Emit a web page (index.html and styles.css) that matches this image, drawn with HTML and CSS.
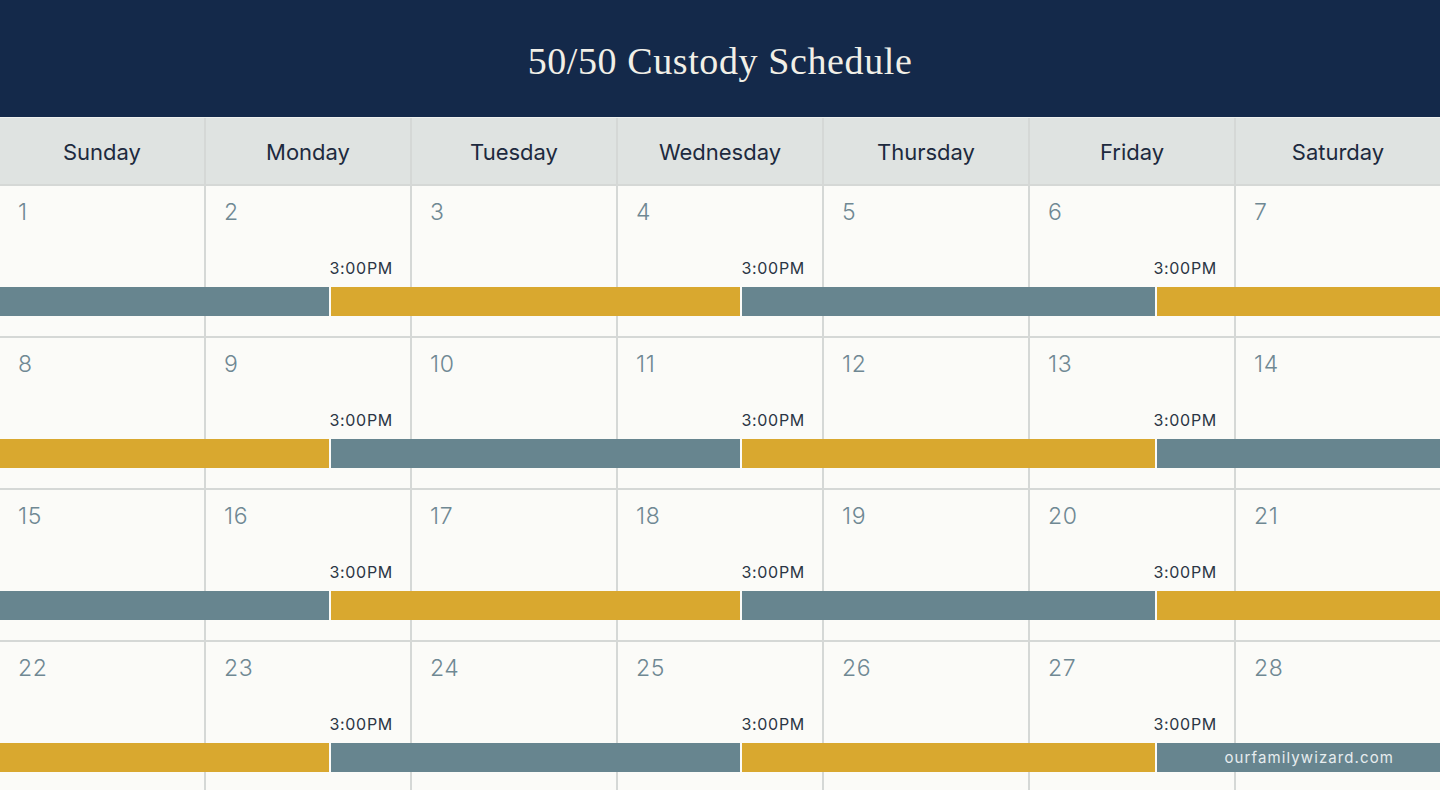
FILE: index.html
```html
<!DOCTYPE html>
<html lang="en">
<head>
<meta charset="utf-8">
<title>50/50 Custody Schedule</title>
<link rel="stylesheet" href="styles.css">
</head>
<body>
<header class="title-bar"><h1 class="title">50/50 Custody Schedule</h1></header>
<main class="calendar">
  <div class="weekdays">
    <div class="wd">Sunday</div><div class="wd">Monday</div><div class="wd">Tuesday</div><div class="wd">Wednesday</div><div class="wd">Thursday</div><div class="wd">Friday</div><div class="wd">Saturday</div>
  </div>

  <div class="week">
    <div class="day"><span class="num">1</span></div>
    <div class="day"><span class="num">2</span><span class="time">3:00PM</span></div>
    <div class="day"><span class="num">3</span></div>
    <div class="day"><span class="num">4</span><span class="time">3:00PM</span></div>
    <div class="day"><span class="num">5</span></div>
    <div class="day"><span class="num">6</span><span class="time">3:00PM</span></div>
    <div class="day"><span class="num">7</span></div>
    <div class="bar"><span class="seg s1 blue"></span><span class="seg s2 gold"></span><span class="seg s3 blue"></span><span class="seg s4 gold"></span></div>
  </div>

  <div class="week">
    <div class="day"><span class="num">8</span></div>
    <div class="day"><span class="num">9</span><span class="time">3:00PM</span></div>
    <div class="day"><span class="num">10</span></div>
    <div class="day"><span class="num">11</span><span class="time">3:00PM</span></div>
    <div class="day"><span class="num">12</span></div>
    <div class="day"><span class="num">13</span><span class="time">3:00PM</span></div>
    <div class="day"><span class="num">14</span></div>
    <div class="bar"><span class="seg s1 gold"></span><span class="seg s2 blue"></span><span class="seg s3 gold"></span><span class="seg s4 blue"></span></div>
  </div>

  <div class="week">
    <div class="day"><span class="num">15</span></div>
    <div class="day"><span class="num">16</span><span class="time">3:00PM</span></div>
    <div class="day"><span class="num">17</span></div>
    <div class="day"><span class="num">18</span><span class="time">3:00PM</span></div>
    <div class="day"><span class="num">19</span></div>
    <div class="day"><span class="num">20</span><span class="time">3:00PM</span></div>
    <div class="day"><span class="num">21</span></div>
    <div class="bar"><span class="seg s1 blue"></span><span class="seg s2 gold"></span><span class="seg s3 blue"></span><span class="seg s4 gold"></span></div>
  </div>

  <div class="week">
    <div class="day"><span class="num">22</span></div>
    <div class="day"><span class="num">23</span><span class="time">3:00PM</span></div>
    <div class="day"><span class="num">24</span></div>
    <div class="day"><span class="num">25</span><span class="time">3:00PM</span></div>
    <div class="day"><span class="num">26</span></div>
    <div class="day"><span class="num">27</span><span class="time">3:00PM</span></div>
    <div class="day"><span class="num">28</span></div>
    <div class="bar"><span class="seg s1 gold"></span><span class="seg s2 blue"></span><span class="seg s3 gold"></span><span class="seg s4 blue brand"><span class="brand-text">ourfamilywizard.com</span></span></div>
  </div>
</main>
</body>
</html>
```

FILE: styles.css
```css
* { box-sizing: border-box; }
html, body { margin: 0; padding: 0; }
body {
  width: 1440px;
  height: 790px;
  overflow: hidden;
  background: #fbfbf8;
  font-family: Inter, "Noto Sans", sans-serif;
}
.title-bar {
  height: 117px;
  background: #14294a;
  display: flex;
  align-items: center;
  justify-content: center;
  padding-top: 5px;
}
.title {
  margin: 0;
  font-family: "Liberation Serif", "DejaVu Serif", serif;
  font-weight: normal;
  font-size: 38px;
  letter-spacing: 0.6px;
  color: #f1efe7;
}
.calendar {
  display: grid;
  row-gap: 2px;
  background: #d5d8d6;
}
.weekdays {
  display: grid;
  grid-template-columns: repeat(7, 1fr);
  column-gap: 2px;
  height: 67px;
  border-top: 1px solid #eef0ee;
}
.wd {
  background: #dfe3e1;
  display: flex;
  align-items: center;
  justify-content: center;
  font-size: 22px;
  color: #1d2a3e;
  padding-top: 2px;
}
.week {
  display: grid;
  grid-template-columns: repeat(7, 1fr);
  grid-template-rows: 101px 29px 20px;
  column-gap: 2px;
}
.day {
  grid-row: 1 / 4;
  background: #fbfbf8;
  display: grid;
  grid-template-rows: 101px 1fr;
}
.day:nth-child(1) { grid-column: 1; }
.day:nth-child(2) { grid-column: 2; }
.day:nth-child(3) { grid-column: 3; }
.day:nth-child(4) { grid-column: 4; }
.day:nth-child(5) { grid-column: 5; }
.day:nth-child(6) { grid-column: 6; }
.day:nth-child(7) { grid-column: 7; }
.num {
  grid-area: 1 / 1;
  align-self: start;
  padding: 13px 0 0 18px;
  font-size: 23px;
  line-height: 26px;
  font-weight: 300;
  letter-spacing: 0.6px;
  color: #6f8893;
}
.time {
  grid-area: 1 / 1;
  align-self: end;
  justify-self: end;
  padding: 0 17px 9px 0;
  font-size: 16px;
  line-height: 20px;
  letter-spacing: 0.7px;
  color: #2b3645;
}
.bar {
  grid-row: 2;
  grid-column: 1 / -1;
  display: flex;
  gap: 2px;
  background: #fbfbf8;
  position: relative;
  z-index: 1;
}
.seg { display: block; height: 100%; min-width: 0; flex: 0 0 auto; }
.s1 { width: calc((100% - 6px) * 329 / 1434); }
.s2 { width: calc((100% - 6px) * 409 / 1434); }
.s3 { width: calc((100% - 6px) * 413 / 1434); }
.s4 { flex: 1 1 0; }
.blue { background: #67858f; }
.gold { background: #d9a82f; }
.brand {
  display: flex;
  align-items: center;
  justify-content: flex-end;
}
.brand-text {
  margin-right: 46px;
  font-size: 15px;
  letter-spacing: 1.1px;
  color: #e6ecee;
}
```
